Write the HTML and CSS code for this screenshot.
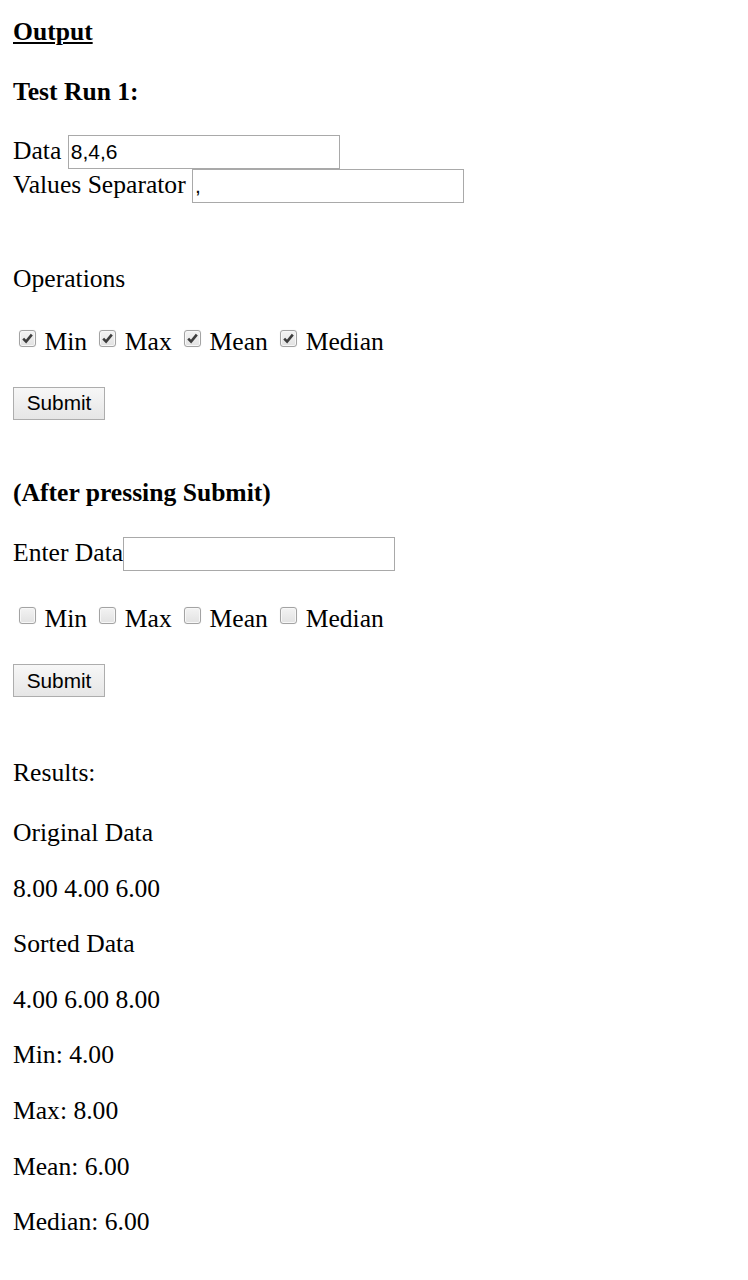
FILE: index.html
```html
<!DOCTYPE html>
<html lang="en">
<head>
<meta charset="utf-8">
<title>Output</title>
<link rel="stylesheet" href="styles.css">
</head>
<body>
<div class="page">
  <p class="title"><b><u>Output</u></b></p>
  <p class="run"><b>Test Run 1:</b></p>
  <p class="fields">Data <input class="field" type="text" value="8,4,6"><br>Values Separator <input class="field" type="text" value=","></p>
  <p class="ops">Operations</p>
  <p class="checks"><span class="box on"><svg viewBox="0 0 15 15" width="15" height="15"><path d="M3.2 7.6 L6.1 10.6 L11.8 3.6" /></svg></span> Min <span class="box on"><svg viewBox="0 0 15 15" width="15" height="15"><path d="M3.2 7.6 L6.1 10.6 L11.8 3.6" /></svg></span> Max <span class="box on"><svg viewBox="0 0 15 15" width="15" height="15"><path d="M3.2 7.6 L6.1 10.6 L11.8 3.6" /></svg></span> Mean <span class="box on"><svg viewBox="0 0 15 15" width="15" height="15"><path d="M3.2 7.6 L6.1 10.6 L11.8 3.6" /></svg></span> Median</p>
  <p class="actions"><button class="btn" type="button">Submit</button></p>
  <p class="after"><b>(After pressing Submit)</b></p>
  <p class="enter">Enter Data<input class="field" type="text"></p>
  <p class="checks checks-b"><span class="box"></span> Min <span class="box"></span> Max <span class="box"></span> Mean <span class="box"></span> Median</p>
  <p class="actions actions-b"><button class="btn" type="button">Submit</button></p>
  <p class="results">Results:</p>
  <p class="res res-first">Original Data</p>
  <p class="res">8.00 4.00 6.00</p>
  <p class="res">Sorted Data</p>
  <p class="res">4.00 6.00 8.00</p>
  <p class="res">Min: 4.00</p>
  <p class="res">Max: 8.00</p>
  <p class="res">Mean: 6.00</p>
  <p class="res">Median: 6.00</p>
</div>
</body>
</html>
```
FILE: styles.css
```css
html, body {
  margin: 0;
  padding: 0;
  background: #ffffff;
}

body {
  font-family: "Liberation Serif", "Times New Roman", serif;
  font-size: 25.6px;
  line-height: 29.6px;
  color: #000000;
}

.page {
  padding: 0 13px;
}

.page p {
  margin: 26px 0 0 0;
}

.page .title { margin-top: 16.6px; }
.page .run { margin-top: 30.5px; }
.page .fields { margin-top: 28.5px; }
.page .ops { margin-top: 61.2px; }
.page .checks { margin-top: 33.5px; }
.page .actions { margin-top: 30px; }
.page .after { margin-top: 58.6px; }
.page .enter { margin-top: 29.5px; }
.page .checks-b { margin-top: 32.6px; }
.page .actions-b { margin-top: 30.8px; }
.page .results { margin-top: 60.6px; }
.page .res-first { margin-top: 30.5px; }

.field {
  box-sizing: border-box;
  width: 272px;
  height: 34px;
  margin: 0;
  padding: 0 2px;
  border: 1px solid #a9a9a9;
  border-radius: 0;
  background: #ffffff;
  font-family: "Liberation Sans", Arial, sans-serif;
  font-size: 21px;
  color: #000000;
  vertical-align: baseline;
  outline: none;
}

.box {
  display: inline-block;
  box-sizing: border-box;
  width: 17px;
  height: 17px;
  margin: 0 2px 3px 6px;
  border: 1px solid #a3a3a3;
  border-radius: 3px;
  background: linear-gradient(to bottom, #f3f3f3 0%, #e2e2e2 100%);
  box-shadow: inset 0 0 0 1px #f7f7f7, 0 0 1px rgba(0, 0, 0, 0.15);
  vertical-align: baseline;
}

.box svg {
  display: block;
}

.box svg path {
  fill: none;
  stroke: #3d3d3d;
  stroke-width: 2.6;
  stroke-linecap: butt;
  stroke-linejoin: miter;
}

.btn {
  box-sizing: border-box;
  width: 92px;
  height: 33px;
  margin: 0;
  padding: 0;
  border: 1px solid #adadad;
  border-radius: 0;
  background: linear-gradient(to bottom, #f7f7f7 0%, #e6e6e6 100%);
  font-family: "Liberation Sans", Arial, sans-serif;
  font-size: 20.8px;
  color: #000000;
  vertical-align: baseline;
}
```
